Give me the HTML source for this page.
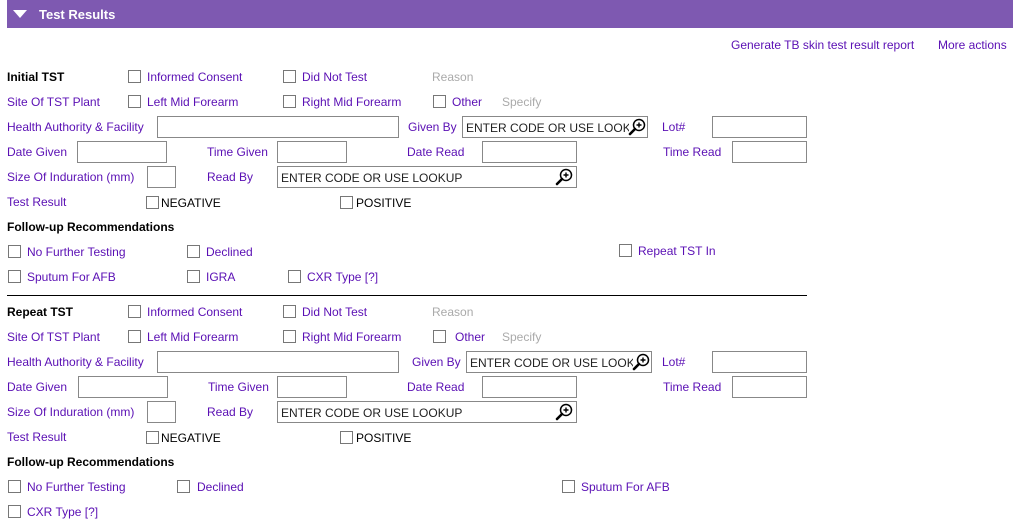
<!DOCTYPE html>
<html><head><meta charset="utf-8"><style>
body{margin:0;width:1013px;height:525px;background:#fff;position:relative;overflow:hidden;font-family:Tahoma,"DejaVu Sans","Liberation Sans",sans-serif;font-size:12px}
.h{position:absolute;left:7px;top:0;width:1006px;height:28px;background:#7e59b1}
.h span{position:absolute;left:32px;top:7px;color:#fff;font-weight:bold;font-size:13px;font-family:"Liberation Sans",sans-serif}
.tri{position:absolute;left:6px;top:10px;width:0;height:0;border-left:7px solid transparent;border-right:7px solid transparent;border-top:8px solid #fff}
.t{position:absolute;line-height:14px;margin-top:1px;color:#5a0fb4;white-space:nowrap;font-family:"Liberation Sans",sans-serif;font-size:12px}
.b{color:#000;font-weight:bold}
.k{color:#000}
.g{color:#aaa}
.c{position:absolute;width:11px;height:11px;border:1px solid #777;background:#fff}
.i{position:absolute;border:1px solid #888;background:#fff;height:20px;box-sizing:border-box}
.i span{position:absolute;left:3px;top:4px;font-family:"Liberation Sans",sans-serif;font-size:12px;color:#222;white-space:nowrap;overflow:hidden;width:163px;line-height:14px}
.m{position:absolute;right:1px;top:1px}
.hr{position:absolute;left:7px;top:295px;width:800px;height:1px;background:#000}
</style></head><body>
<div class="h"><div class="tri"></div><span>Test Results</span></div>
<div class="t" style="left:731px;top:37px">Generate TB skin test result report</div>
<div class="t" style="left:938px;top:37px">More actions</div>

<div class="t b" style="left:7px;top:69px">Initial TST</div>
<div class="c" style="left:128px;top:70px"></div><div class="t" style="left:147px;top:69px">Informed Consent</div>
<div class="c" style="left:283px;top:70px"></div><div class="t" style="left:302px;top:69px">Did Not Test</div>
<div class="t g" style="left:432px;top:69px">Reason</div>

<div class="t" style="left:7px;top:94px">Site Of TST Plant</div>
<div class="c" style="left:128px;top:95px"></div><div class="t" style="left:147px;top:94px">Left Mid Forearm</div>
<div class="c" style="left:283px;top:95px"></div><div class="t" style="left:302px;top:94px">Right Mid Forearm</div>
<div class="c" style="left:433px;top:95px"></div><div class="t" style="left:452px;top:94px">Other</div>
<div class="t g" style="left:502px;top:94px">Specify</div>

<div class="t" style="left:7px;top:119px">Health Authority &amp; Facility</div>
<div class="i" style="left:157px;top:116px;width:242px;height:22px"></div>
<div class="t" style="left:408px;top:119px">Given By</div>
<div class="i" style="left:462px;top:116px;width:186px;height:22px"><span>ENTER CODE OR USE LOOKUP</span><svg class="m" width="18" height="18" viewBox="0 0 18 18"><circle cx="11" cy="7" r="5.5" fill="#fff" stroke="#000" stroke-width="1.5"/><path d="M8.5 7h5M11 4.5v5" stroke="#000" stroke-width="1.4"/><path d="M7 11L2 16" stroke="#000" stroke-width="2.6" stroke-linecap="round"/></svg></div>
<div class="t" style="left:662px;top:119px">Lot#</div>
<div class="i" style="left:712px;top:116px;width:95px;height:22px"></div>

<div class="t" style="left:7px;top:144px">Date Given</div>
<div class="i" style="left:77px;top:141px;width:90px;height:22px"></div>
<div class="t" style="left:207px;top:144px">Time Given</div>
<div class="i" style="left:277px;top:141px;width:70px;height:22px"></div>
<div class="t" style="left:407px;top:144px">Date Read</div>
<div class="i" style="left:482px;top:141px;width:95px;height:22px"></div>
<div class="t" style="left:663px;top:144px">Time Read</div>
<div class="i" style="left:732px;top:141px;width:75px;height:22px"></div>

<div class="t" style="left:7px;top:169px">Size Of Induration (mm)</div>
<div class="i" style="left:147px;top:166px;width:29px;height:22px"></div>
<div class="t" style="left:207px;top:169px">Read By</div>
<div class="i" style="left:277px;top:166px;width:300px;height:22px"><span style="width:280px">ENTER CODE OR USE LOOKUP</span><svg class="m" style="right:3px" width="18" height="18" viewBox="0 0 18 18"><circle cx="11" cy="7" r="5.5" fill="#fff" stroke="#000" stroke-width="1.5"/><path d="M8.5 7h5M11 4.5v5" stroke="#000" stroke-width="1.4"/><path d="M7 11L2 16" stroke="#000" stroke-width="2.6" stroke-linecap="round"/></svg></div>

<div class="t" style="left:7px;top:194px">Test Result</div>
<div class="c" style="left:146px;top:196px"></div><div class="t k" style="left:161px;top:195px">NEGATIVE</div>
<div class="c" style="left:340px;top:196px"></div><div class="t k" style="left:356px;top:195px">POSITIVE</div>

<div class="t b" style="left:7px;top:219px">Follow-up Recommendations</div>
<div class="c" style="left:8px;top:245px"></div><div class="t" style="left:27px;top:244px">No Further Testing</div>
<div class="c" style="left:187px;top:245px"></div><div class="t" style="left:206px;top:244px">Declined</div>
<div class="c" style="left:619px;top:244px"></div><div class="t" style="left:638px;top:243px">Repeat TST In</div>
<div class="c" style="left:8px;top:270px"></div><div class="t" style="left:27px;top:269px">Sputum For AFB</div>
<div class="c" style="left:187px;top:270px"></div><div class="t" style="left:206px;top:269px">IGRA</div>
<div class="c" style="left:288px;top:270px"></div><div class="t" style="left:307px;top:269px">CXR Type [?]</div>

<div class="hr"></div>

<div class="t b" style="left:7px;top:304px">Repeat TST</div>
<div class="c" style="left:128px;top:305px"></div><div class="t" style="left:147px;top:304px">Informed Consent</div>
<div class="c" style="left:283px;top:305px"></div><div class="t" style="left:302px;top:304px">Did Not Test</div>
<div class="t g" style="left:432px;top:304px">Reason</div>

<div class="t" style="left:7px;top:329px">Site Of TST Plant</div>
<div class="c" style="left:128px;top:330px"></div><div class="t" style="left:147px;top:329px">Left Mid Forearm</div>
<div class="c" style="left:283px;top:330px"></div><div class="t" style="left:302px;top:329px">Right Mid Forearm</div>
<div class="c" style="left:433px;top:330px"></div><div class="t" style="left:455px;top:329px">Other</div>
<div class="t g" style="left:502px;top:329px">Specify</div>

<div class="t" style="left:7px;top:354px">Health Authority &amp; Facility</div>
<div class="i" style="left:157px;top:351px;width:242px;height:22px"></div>
<div class="t" style="left:412px;top:354px">Given By</div>
<div class="i" style="left:466px;top:351px;width:186px;height:22px"><span>ENTER CODE OR USE LOOKUP</span><svg class="m" width="18" height="18" viewBox="0 0 18 18"><circle cx="11" cy="7" r="5.5" fill="#fff" stroke="#000" stroke-width="1.5"/><path d="M8.5 7h5M11 4.5v5" stroke="#000" stroke-width="1.4"/><path d="M7 11L2 16" stroke="#000" stroke-width="2.6" stroke-linecap="round"/></svg></div>
<div class="t" style="left:662px;top:354px">Lot#</div>
<div class="i" style="left:712px;top:351px;width:95px;height:22px"></div>

<div class="t" style="left:7px;top:379px">Date Given</div>
<div class="i" style="left:78px;top:376px;width:90px;height:22px"></div>
<div class="t" style="left:208px;top:379px">Time Given</div>
<div class="i" style="left:277px;top:376px;width:70px;height:22px"></div>
<div class="t" style="left:407px;top:379px">Date Read</div>
<div class="i" style="left:482px;top:376px;width:95px;height:22px"></div>
<div class="t" style="left:663px;top:379px">Time Read</div>
<div class="i" style="left:732px;top:376px;width:75px;height:22px"></div>

<div class="t" style="left:7px;top:404px">Size Of Induration (mm)</div>
<div class="i" style="left:147px;top:401px;width:29px;height:22px"></div>
<div class="t" style="left:207px;top:404px">Read By</div>
<div class="i" style="left:277px;top:401px;width:300px;height:22px"><span style="width:280px">ENTER CODE OR USE LOOKUP</span><svg class="m" style="right:3px" width="18" height="18" viewBox="0 0 18 18"><circle cx="11" cy="7" r="5.5" fill="#fff" stroke="#000" stroke-width="1.5"/><path d="M8.5 7h5M11 4.5v5" stroke="#000" stroke-width="1.4"/><path d="M7 11L2 16" stroke="#000" stroke-width="2.6" stroke-linecap="round"/></svg></div>

<div class="t" style="left:7px;top:429px">Test Result</div>
<div class="c" style="left:146px;top:431px"></div><div class="t k" style="left:161px;top:430px">NEGATIVE</div>
<div class="c" style="left:340px;top:431px"></div><div class="t k" style="left:356px;top:430px">POSITIVE</div>

<div class="t b" style="left:7px;top:454px">Follow-up Recommendations</div>
<div class="c" style="left:8px;top:480px"></div><div class="t" style="left:27px;top:479px">No Further Testing</div>
<div class="c" style="left:177px;top:480px"></div><div class="t" style="left:197px;top:479px">Declined</div>
<div class="c" style="left:562px;top:480px"></div><div class="t" style="left:581px;top:479px">Sputum For AFB</div>
<div class="c" style="left:8px;top:505px"></div><div class="t" style="left:27px;top:504px">CXR Type [?]</div>
</body></html>
